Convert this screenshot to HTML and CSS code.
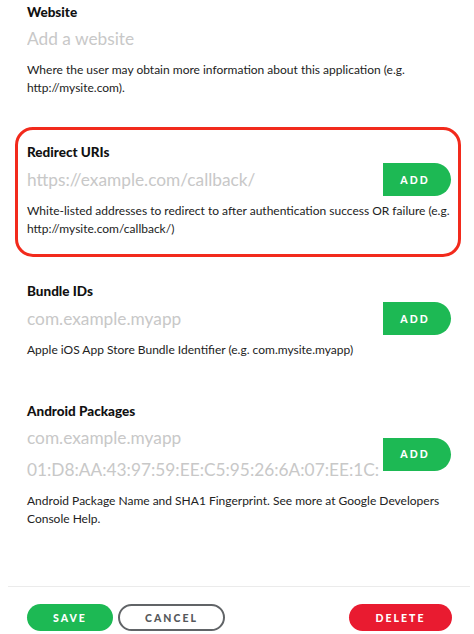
FILE: index.html
```html
<!DOCTYPE html>
<html lang="en">
<head>
<meta charset="utf-8">
<title>Edit settings</title>
<link rel="stylesheet" href="styles.css">
</head>
<body>
<div class="page">
  <section class="field field-website">
    <div class="label">Website</div>
    <div class="row">
      <div class="inputs">
        <div class="input">Add a website</div>
      </div>
    </div>
    <p class="desc">Where the user may obtain more information about this application (e.g. http://mysite.com).</p>
  </section>

  <section class="field field-highlight">
    <div class="label">Redirect URIs</div>
    <div class="row">
      <div class="inputs">
        <div class="input">https://example.com/callback/</div>
      </div>
      <button class="btn-add">ADD</button>
    </div>
    <p class="desc">White-listed addresses to redirect to after authentication success OR failure (e.g. http://mysite.com/callback/)</p>
  </section>

  <section class="field field-bundle">
    <div class="label">Bundle IDs</div>
    <div class="row">
      <div class="inputs">
        <div class="input">com.example.myapp</div>
      </div>
      <button class="btn-add">ADD</button>
    </div>
    <p class="desc">Apple iOS App Store Bundle Identifier (e.g. com.mysite.myapp)</p>
  </section>

  <section class="field field-android">
    <div class="label">Android Packages</div>
    <div class="row">
      <div class="inputs">
        <div class="input">com.example.myapp</div>
        <div class="input">01:D8:AA:43:97:59:EE:C5:95:26:6A:07:EE:1C:</div>
      </div>
      <button class="btn-add">ADD</button>
    </div>
    <p class="desc">Android Package Name and SHA1 Fingerprint. See more at Google Developers Console Help.</p>
  </section>

  <footer class="footer">
    <div class="footer-left">
      <button class="btn btn-save">SAVE</button>
      <button class="btn btn-cancel">CANCEL</button>
    </div>
    <button class="btn btn-delete">DELETE</button>
  </footer>
</div>
</body>
</html>
```

FILE: styles.css
```css
* { box-sizing: border-box; }

html, body {
  margin: 0;
  padding: 0;
  background: #ffffff;
}

body {
  font-family: Lato, "Noto Sans", sans-serif;
  color: #181818;
}

.page {
  width: 474px;
  padding-top: 3px;
}

.field {
  padding: 0 23px 0 27px;
}

.field-highlight {
  margin: 30px 13px 0 15px;
  padding: 13px 7px 16px 9px;
  border: 3px solid #f22a1c;
  border-radius: 18px;
}

.field-bundle {
  margin-top: 25px;
}

.field-android {
  margin-top: 43px;
}

.label {
  font-size: 13.5px;
  font-weight: 900;
  line-height: 18px;
  color: #111111;
}

.row {
  display: flex;
  align-items: center;
  margin-top: 2px;
}

.inputs {
  flex: 1;
  min-width: 0;
  display: flex;
  flex-direction: column;
}

.input {
  height: 32px;
  line-height: 32px;
  font-size: 17.3px;
  color: #c8c8c8;
  white-space: nowrap;
  overflow: hidden;
}

.btn-add {
  flex: none;
  width: 68px;
  height: 33px;
  border: none;
  margin: 0;
  padding: 0 4px 0 0;
  background: #1db954;
  color: #ffffff;
  font-family: Lato, "Noto Sans", sans-serif;
  font-weight: 900;
  font-size: 10.5px;
  letter-spacing: 2px;
  border-radius: 0 17px 17px 0;
}

.desc {
  margin: 6px 0 0;
  font-size: 12px;
  line-height: 18px;
  color: #222222;
}

.footer {
  margin-top: 58px;
  border-top: 1px solid #ebebeb;
  margin-left: 8px;
  margin-right: 4px;
  padding: 17px 18px 0 19px;
  display: flex;
  justify-content: space-between;
  align-items: center;
}

.footer-left {
  display: flex;
  gap: 5px;
}

.btn {
  height: 27px;
  border-radius: 14px;
  font-family: Lato, "Noto Sans", sans-serif;
  font-weight: 900;
  font-size: 10.5px;
  letter-spacing: 2px;
  padding: 0;
  margin: 0;
}

.btn-save {
  width: 86px;
  background: #1db954;
  color: #ffffff;
  border: none;
}

.btn-cancel {
  width: 107px;
  background: #ffffff;
  color: #56585b;
  border: 2px solid #616467;
}

.btn-delete {
  width: 103px;
  background: #e91b30;
  color: #ffffff;
  border: none;
}
```
